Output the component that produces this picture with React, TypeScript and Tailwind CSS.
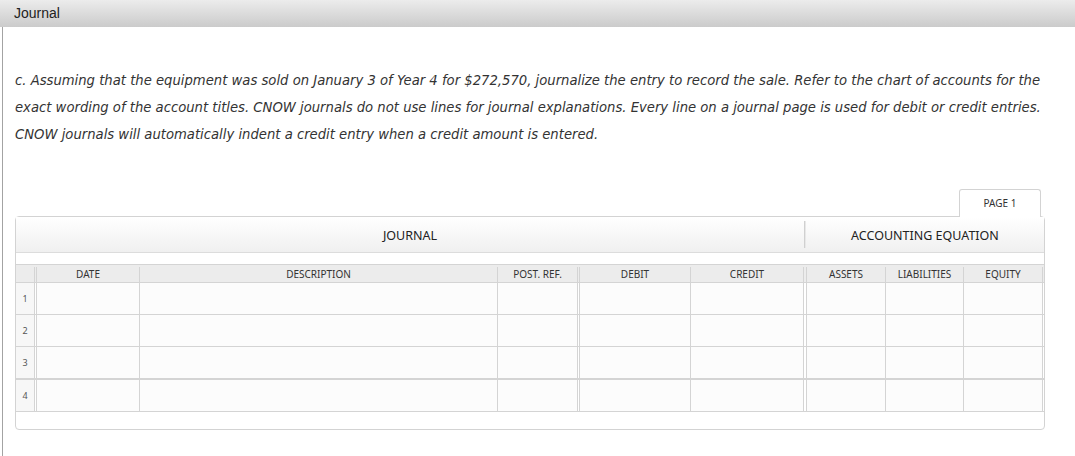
const cols = [
  { key: 'date', label: 'DATE', cls: 'w-[104px] border-l border-r ml-[1px]' },
  { key: 'desc', label: 'DESCRIPTION', cls: 'w-[358px] border-r' },
  { key: 'ref', label: 'POST. REF.', cls: 'w-[80px] border-r' },
  { key: 'debit', label: 'DEBIT', cls: 'w-[112px] border-l border-r ml-[1px]' },
  { key: 'credit', label: 'CREDIT', cls: 'w-[113px] border-r' },
  { key: 'assets', label: 'ASSETS', cls: 'w-[80px] border-l border-r ml-[2px]' },
  { key: 'liab', label: 'LIABILITIES', cls: 'w-[78px] border-r' },
  { key: 'equity', label: 'EQUITY', cls: 'w-[79px] border-r' },
]

const rows = [1, 2, 3, 4]

const lines = [
  'c. Assuming that the equipment was sold on January 3 of Year 4 for $272,570, journalize the entry to record the sale. Refer to the chart of accounts for the',
  'exact wording of the account titles. CNOW journals do not use lines for journal explanations. Every line on a journal page is used for debit or credit entries.',
  'CNOW journals will automatically indent a credit entry when a credit amount is entered.',
]

export default function App() {
  return (
    <div className="h-[456px] w-[1075px] overflow-hidden bg-white">
      <div className="flex h-[27px] items-center bg-gradient-to-b from-[#ececec] to-[#cbcbcb] pl-[14px] font-['Liberation_Sans',Arial,sans-serif] text-[14px] text-[#222]">
        Journal
      </div>
      <div className="ml-[2px] h-[429px] border-l border-[#a3a3a3]">
        <div className="pl-[12px] pt-[40px] font-['DejaVu_Sans',sans-serif] text-[13.2px] italic leading-[27px] text-[#333]">
          {lines.map((l) => (
            <div key={l} className="whitespace-nowrap">
              {l}
            </div>
          ))}
        </div>

        <div className="ml-[12px] mt-[41px] w-[1030px] font-['Noto_Sans','Open_Sans',sans-serif]">
          <div className="flex justify-end pr-[4px]">
            <div className="-mb-px flex h-[28px] w-[82px] items-center justify-center rounded-t-[3px] border border-b-0 border-[#d3d3d3] bg-white pb-[1px] text-[10px] text-[#333]">
              PAGE 1
            </div>
          </div>
          <div className="rounded-[4px] border border-[#d3d3d3] bg-white">
            <div className="flex h-[36px] border-b border-[#dcdcdc] bg-gradient-to-b from-white to-[#f0f0f0] text-[12.5px] text-[#222]">
              <div className="flex w-[788px] items-center justify-center pt-[3px]">JOURNAL</div>
              <div className="my-[4px] w-[2px] border-x border-[#d0d0d0] border-r-[#e8e8e8]" />
              <div className="flex flex-1 items-center justify-center pt-[3px]">ACCOUNTING EQUATION</div>
            </div>

            <div className="mt-[11px] flex h-[19px] border-y border-[#d4d4d4] bg-[#ececec] pt-[2px] text-[10px] text-[#333]">
              <div className="w-[19px] border-r border-[#d4d4d4]" />
              {cols.map((c) => (
                <div
                  key={c.key}
                  className={`flex items-center justify-center border-[#d4d4d4] ${c.cls}`}
                >
                  {c.label}
                </div>
              ))}
            </div>

            {rows.map((r) => (
              <div
                key={r}
                className={`flex border-b border-[#d4d4d4] ${r === 3 ? 'h-[33px] border-b-2' : 'h-[32px]'}`}
              >
                <div className="flex w-[19px] items-center justify-center border-r border-[#d4d4d4] bg-[#f7f7f7] text-[9px] text-[#555]">
                  {r}
                </div>
                {cols.map((c) => (
                  <div key={c.key} className={`border-[#d4d4d4] bg-[#fcfcfc] ${c.cls}`} />
                ))}
              </div>
            ))}
            <div className="h-[17px]" />
          </div>
        </div>
      </div>
    </div>
  )
}
